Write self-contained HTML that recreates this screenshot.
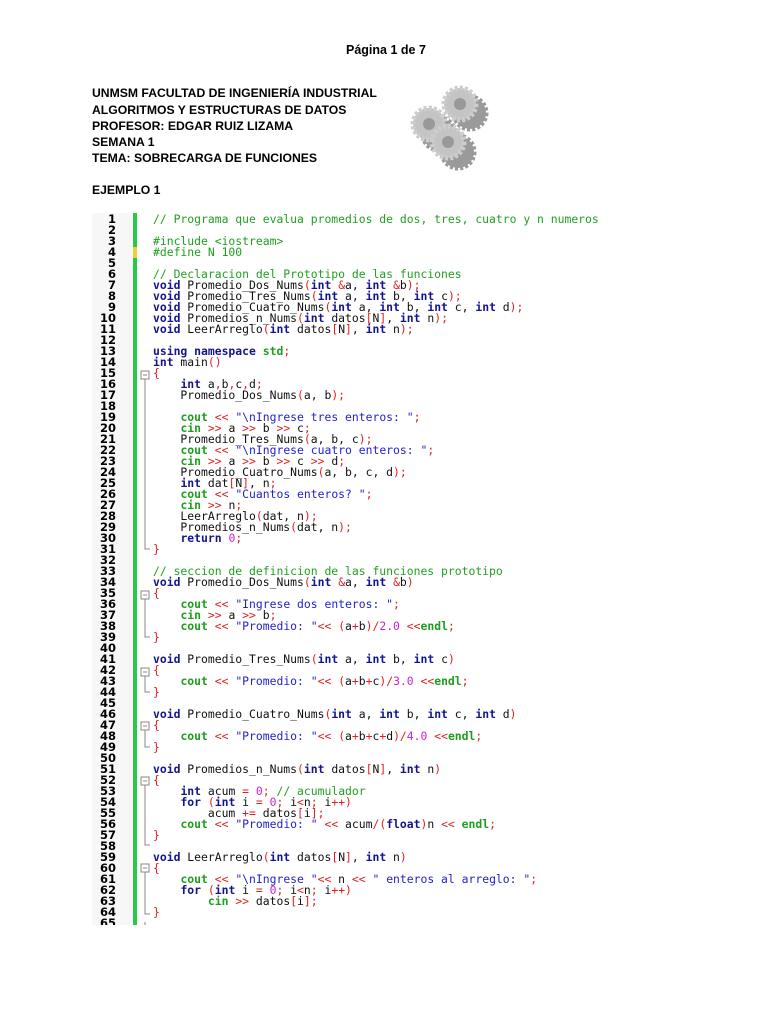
<!DOCTYPE html>
<html><head><meta charset="utf-8"><style>
body{margin:0;width:768px;height:1024px;background:#fff;position:relative;overflow:hidden;font-family:"Liberation Sans",sans-serif}
.h{position:absolute;left:92px;font-weight:bold;font-size:12.2px;color:#000;white-space:nowrap}
#code{position:absolute;left:0;top:0}
.l{position:absolute;left:153px;height:11px;line-height:11px;font-family:"DejaVu Sans Mono",monospace;font-size:11.4px;white-space:pre;color:#111}
.num{position:absolute;left:92px;width:24px;text-align:right;height:11px;line-height:11px;font-family:"DejaVu Sans",sans-serif;font-weight:bold;font-size:11.5px;color:#000}
.k{color:#14148c;font-weight:bold}.s{color:#1e9e1e;font-weight:bold}.c{color:#22a022}.p{color:#2222cc}.o{color:#e02020}.n{color:#d020d0}.g{color:#1e9e1e}
</style></head><body>
<div class="h" style="left:346px;top:43px;font-size:12.5px">Página 1 de 7</div>
<div class="h" style="top:86px">UNMSM FACULTAD DE INGENIERÍA INDUSTRIAL</div>
<div class="h" style="top:103px">ALGORITMOS Y ESTRUCTURAS DE DATOS</div>
<div class="h" style="top:119px">PROFESOR: EDGAR RUIZ LIZAMA</div>
<div class="h" style="top:135px">SEMANA 1</div>
<div class="h" style="top:151px">TEMA: SOBRECARGA DE FUNCIONES</div>
<div class="h" style="top:183px">EJEMPLO 1</div>
<svg style="position:absolute;left:402px;top:82px" width="100" height="100">
<g fill="#9a9a9a" stroke="#9a9a9a" stroke-width="5" stroke-dasharray="3 2">
<circle cx="68" cy="31" r="16"/><circle cx="37" cy="52" r="16"/><circle cx="56" cy="70" r="16"/></g>
<g fill="#c4c4c4" stroke="#cdcdcd" stroke-width="5" stroke-dasharray="3 2">
<circle cx="58" cy="22" r="16"/></g><circle cx="58" cy="22" r="6" fill="#999"/>
<g fill="#c4c4c4" stroke="#cdcdcd" stroke-width="5" stroke-dasharray="3 2">
<circle cx="27" cy="42" r="16"/></g><circle cx="27" cy="42" r="6" fill="#999"/>
<g fill="#c4c4c4" stroke="#cdcdcd" stroke-width="5" stroke-dasharray="3 2">
<circle cx="46" cy="60" r="16"/></g><circle cx="46" cy="60" r="6" fill="#999"/>
</svg>
<div style="position:absolute;left:92px;top:213px;width:40px;height:712px;background:#f7f7f7"></div>
<div style="position:absolute;left:133px;top:213px;width:4px;height:712px;background:#22cc44"></div>
<div style="position:absolute;left:133px;top:247px;width:4px;height:11px;background:#f0d030"></div>
<svg style="position:absolute;left:138px;top:213px" width="14" height="712" stroke="#888" fill="#fff" stroke-width="1">
<path d="M7 163V336h5M7 383V424h5M7 460V479h5M7 514V534h5M7 569V632h5M7 656V701h5M7 709V712"/>
<g><rect x="3" y="158" width="8" height="8"/><rect x="3" y="378" width="8" height="8"/><rect x="3" y="455" width="8" height="8"/><rect x="3" y="509" width="8" height="8"/><rect x="3" y="564" width="8" height="8"/><rect x="3" y="651" width="8" height="8"/></g>
<path d="M5 162h4M5 382h4M5 459h4M5 513h4M5 568h4M5 655h4"/>
</svg>
<div id="code"></div>
<script>
var L=[
'<span class="c">// Programa que evalua promedios de dos, tres, cuatro y n numeros</span>','',
'<span class="g">#include &lt;iostream&gt;</span>','<span class="g">#define N 100</span>','',
'<span class="c">// Declaracion del Prototipo de las funciones</span>',
'<span class="k">void</span> Promedio_Dos_Nums<span class="o">(</span><span class="k">int</span> <span class="o">&amp;</span>a, <span class="k">int</span> <span class="o">&amp;</span>b<span class="o">);</span>',
'<span class="k">void</span> Promedio_Tres_Nums<span class="o">(</span><span class="k">int</span> a, <span class="k">int</span> b, <span class="k">int</span> c<span class="o">);</span>',
'<span class="k">void</span> Promedio_Cuatro_Nums<span class="o">(</span><span class="k">int</span> a, <span class="k">int</span> b, <span class="k">int</span> c, <span class="k">int</span> d<span class="o">);</span>',
'<span class="k">void</span> Promedios_n_Nums<span class="o">(</span><span class="k">int</span> datos<span class="o">[</span>N<span class="o">]</span>, <span class="k">int</span> n<span class="o">);</span>',
'<span class="k">void</span> LeerArreglo<span class="o">(</span><span class="k">int</span> datos<span class="o">[</span>N<span class="o">]</span>, <span class="k">int</span> n<span class="o">);</span>','',
'<span class="k">using namespace</span> <span class="s">std</span><span class="o">;</span>',
'<span class="k">int</span> main<span class="o">()</span>','<span class="o">{</span>',
'    <span class="k">int</span> a<span class="o">,</span>b<span class="o">,</span>c<span class="o">,</span>d<span class="o">;</span>',
'    Promedio_Dos_Nums<span class="o">(</span>a, b<span class="o">);</span>','',
'    <span class="s">cout</span> <span class="o">&lt;&lt;</span> <span class="p">"\\nIngrese tres enteros: "</span><span class="o">;</span>',
'    <span class="s">cin</span> <span class="o">&gt;&gt;</span> a <span class="o">&gt;&gt;</span> b <span class="o">&gt;&gt;</span> c<span class="o">;</span>',
'    Promedio_Tres_Nums<span class="o">(</span>a, b, c<span class="o">);</span>',
'    <span class="s">cout</span> <span class="o">&lt;&lt;</span> <span class="p">"\\nIngrese cuatro enteros: "</span><span class="o">;</span>',
'    <span class="s">cin</span> <span class="o">&gt;&gt;</span> a <span class="o">&gt;&gt;</span> b <span class="o">&gt;&gt;</span> c <span class="o">&gt;&gt;</span> d<span class="o">;</span>',
'    Promedio_Cuatro_Nums<span class="o">(</span>a, b, c, d<span class="o">);</span>',
'    <span class="k">int</span> dat<span class="o">[</span>N<span class="o">]</span>, n<span class="o">;</span>',
'    <span class="s">cout</span> <span class="o">&lt;&lt;</span> <span class="p">"Cuantos enteros? "</span><span class="o">;</span>',
'    <span class="s">cin</span> <span class="o">&gt;&gt;</span> n<span class="o">;</span>',
'    LeerArreglo<span class="o">(</span>dat, n<span class="o">);</span>',
'    Promedios_n_Nums<span class="o">(</span>dat, n<span class="o">);</span>',
'    <span class="k">return</span> <span class="n">0</span><span class="o">;</span>','<span class="o">}</span>','',
'<span class="c">// seccion de definicion de las funciones prototipo</span>',
'<span class="k">void</span> Promedio_Dos_Nums<span class="o">(</span><span class="k">int</span> <span class="o">&amp;</span>a, <span class="k">int</span> <span class="o">&amp;</span>b<span class="o">)</span>','<span class="o">{</span>',
'    <span class="s">cout</span> <span class="o">&lt;&lt;</span> <span class="p">"Ingrese dos enteros: "</span><span class="o">;</span>',
'    <span class="s">cin</span> <span class="o">&gt;&gt;</span> a <span class="o">&gt;&gt;</span> b<span class="o">;</span>',
'    <span class="s">cout</span> <span class="o">&lt;&lt;</span> <span class="p">"Promedio: "</span><span class="o">&lt;&lt;</span> <span class="o">(</span>a<span class="o">+</span>b<span class="o">)/</span><span class="n">2.0</span> <span class="o">&lt;&lt;</span><span class="s">endl</span><span class="o">;</span>',
'<span class="o">}</span>','',
'<span class="k">void</span> Promedio_Tres_Nums<span class="o">(</span><span class="k">int</span> a, <span class="k">int</span> b, <span class="k">int</span> c<span class="o">)</span>','<span class="o">{</span>',
'    <span class="s">cout</span> <span class="o">&lt;&lt;</span> <span class="p">"Promedio: "</span><span class="o">&lt;&lt;</span> <span class="o">(</span>a<span class="o">+</span>b<span class="o">+</span>c<span class="o">)/</span><span class="n">3.0</span> <span class="o">&lt;&lt;</span><span class="s">endl</span><span class="o">;</span>',
'<span class="o">}</span>','',
'<span class="k">void</span> Promedio_Cuatro_Nums<span class="o">(</span><span class="k">int</span> a, <span class="k">int</span> b, <span class="k">int</span> c, <span class="k">int</span> d<span class="o">)</span>','<span class="o">{</span>',
'    <span class="s">cout</span> <span class="o">&lt;&lt;</span> <span class="p">"Promedio: "</span><span class="o">&lt;&lt;</span> <span class="o">(</span>a<span class="o">+</span>b<span class="o">+</span>c<span class="o">+</span>d<span class="o">)/</span><span class="n">4.0</span> <span class="o">&lt;&lt;</span><span class="s">endl</span><span class="o">;</span>',
'<span class="o">}</span>','',
'<span class="k">void</span> Promedios_n_Nums<span class="o">(</span><span class="k">int</span> datos<span class="o">[</span>N<span class="o">]</span>, <span class="k">int</span> n<span class="o">)</span>','<span class="o">{</span>',
'    <span class="k">int</span> acum <span class="o">=</span> <span class="n">0</span><span class="o">;</span> <span class="c">// acumulador</span>',
'    <span class="k">for</span> <span class="o">(</span><span class="k">int</span> i <span class="o">=</span> <span class="n">0</span><span class="o">;</span> i<span class="o">&lt;</span>n<span class="o">;</span> i<span class="o">++)</span>',
'        acum <span class="o">+=</span> datos<span class="o">[</span>i<span class="o">];</span>',
'    <span class="s">cout</span> <span class="o">&lt;&lt;</span> <span class="p">"Promedio: "</span> <span class="o">&lt;&lt;</span> acum<span class="o">/(</span><span class="k">float</span><span class="o">)</span>n <span class="o">&lt;&lt;</span> <span class="s">endl</span><span class="o">;</span>',
'<span class="o">}</span>','',
'<span class="k">void</span> LeerArreglo<span class="o">(</span><span class="k">int</span> datos<span class="o">[</span>N<span class="o">]</span>, <span class="k">int</span> n<span class="o">)</span>','<span class="o">{</span>',
'    <span class="s">cout</span> <span class="o">&lt;&lt;</span> <span class="p">"\\nIngrese "</span><span class="o">&lt;&lt;</span> n <span class="o">&lt;&lt;</span> <span class="p">" enteros al arreglo: "</span><span class="o">;</span>',
'    <span class="k">for</span> <span class="o">(</span><span class="k">int</span> i <span class="o">=</span> <span class="n">0</span><span class="o">;</span> i<span class="o">&lt;</span>n<span class="o">;</span> i<span class="o">++)</span>',
'        <span class="s">cin</span> <span class="o">&gt;&gt;</span> datos<span class="o">[</span>i<span class="o">];</span>',
'<span class="o">}</span>',''];
var h='';
for(var i=0;i<L.length;i++){var t=214+i*11;
h+='<div class="num" style="top:'+t+'px">'+(i+1)+'</div><div class="l" style="top:'+t+'px">'+L[i]+'</div>';}
document.getElementById('code').innerHTML=h;
</script>
<div style="position:absolute;left:0;top:925px;width:768px;height:99px;background:#fff"></div>
</body></html>
